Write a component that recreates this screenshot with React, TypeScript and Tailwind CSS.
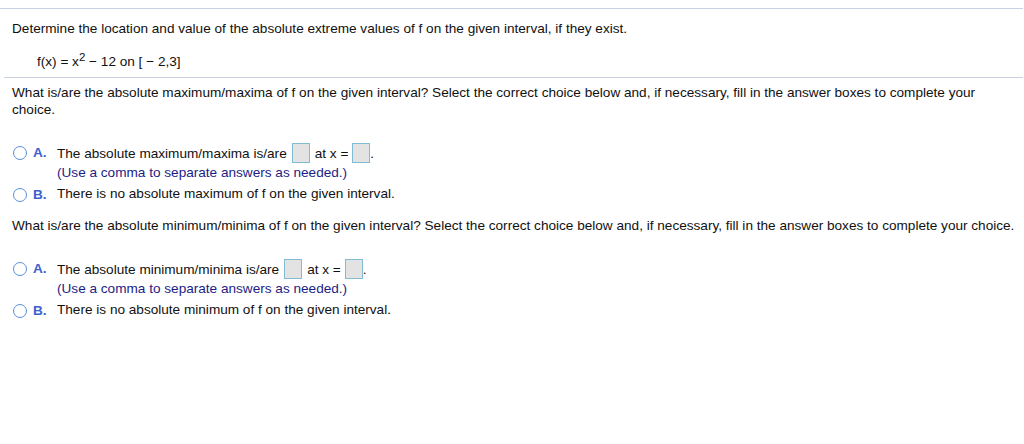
function Radio() {
  return <span className="inline-block w-[14px] h-[14px] rounded-full border-[1.5px] border-[#5a8fd8] bg-white shrink-0" />;
}

function Box() {
  return <span className="inline-block w-[18px] h-[20px] bg-[#e3e3e3] border border-[#82bcd4] align-middle" />;
}

function Choice({ letter, children }: { letter: string; children: React.ReactNode }) {
  return (
    <div className="flex items-start">
      <div className="w-[57px] shrink-0 flex items-center gap-[6px] pl-[13px] pt-[1px]">
        <Radio />
        <span className="font-bold text-[#3a62d0]">{letter}.</span>
      </div>
      <div>{children}</div>
    </div>
  );
}

function Part({ kind, plural }: { kind: string; plural: string }) {
  return (
    <div className="flex flex-col">
      <Choice letter="A">
        <div className="flex items-center h-[20px]">
          <span>The absolute {kind}/{plural} is/are</span>
          <span className="ml-[5px]"><Box /></span>
          <span className="ml-[5px]">at x =</span>
          <span className="ml-[4px]"><Box /></span>
          <span>.</span>
        </div>
        <div className="text-[#1c1c85] mt-[1px]">(Use a comma to separate answers as needed.)</div>
      </Choice>
      <div className="mt-[4px]">
        <Choice letter="B">
          <div>There is no absolute {kind} of f on the given interval.</div>
        </Choice>
      </div>
    </div>
  );
}

export default function App() {
  return (
    <div className="w-[1024px] h-[444px] bg-white text-[#111] text-[13.6px] leading-[17px] font-['Liberation_Sans',Arial,sans-serif]">
      <div className="pt-[8px]">
        <div className="h-px bg-[#c9d0e0] w-[1023px]" />
        <div className="pl-[12px] pt-[11px]">Determine the location and value of the absolute extreme values of f on the given interval, if they exist.</div>
        <div className="pl-[37px] pt-[16px]">
          f(x) = x<sup className="text-[11.5px] top-[-0.45em]">2</sup> − 12 on [ − 2,3]
        </div>
        <div className="h-px bg-[#c9d0e0] ml-[4px] w-[1019px] mt-[7px]" />
        <div className="pl-[12px] pt-[6px] pr-[40px]">
          What is/are the absolute maximum/maxima of f on the given interval? Select the correct choice below and, if necessary, fill in the answer boxes to complete your choice.
        </div>
        <div className="mt-[25px]">
          <Part kind="maximum" plural="maxima" />
        </div>
        <div className="pl-[12px] mt-[14px]">
          What is/are the absolute minimum/minima of f on the given interval? Select the correct choice below and, if necessary, fill in the answer boxes to complete your choice.
        </div>
        <div className="mt-[25px]">
          <Part kind="minimum" plural="minima" />
        </div>
      </div>
    </div>
  );
}
